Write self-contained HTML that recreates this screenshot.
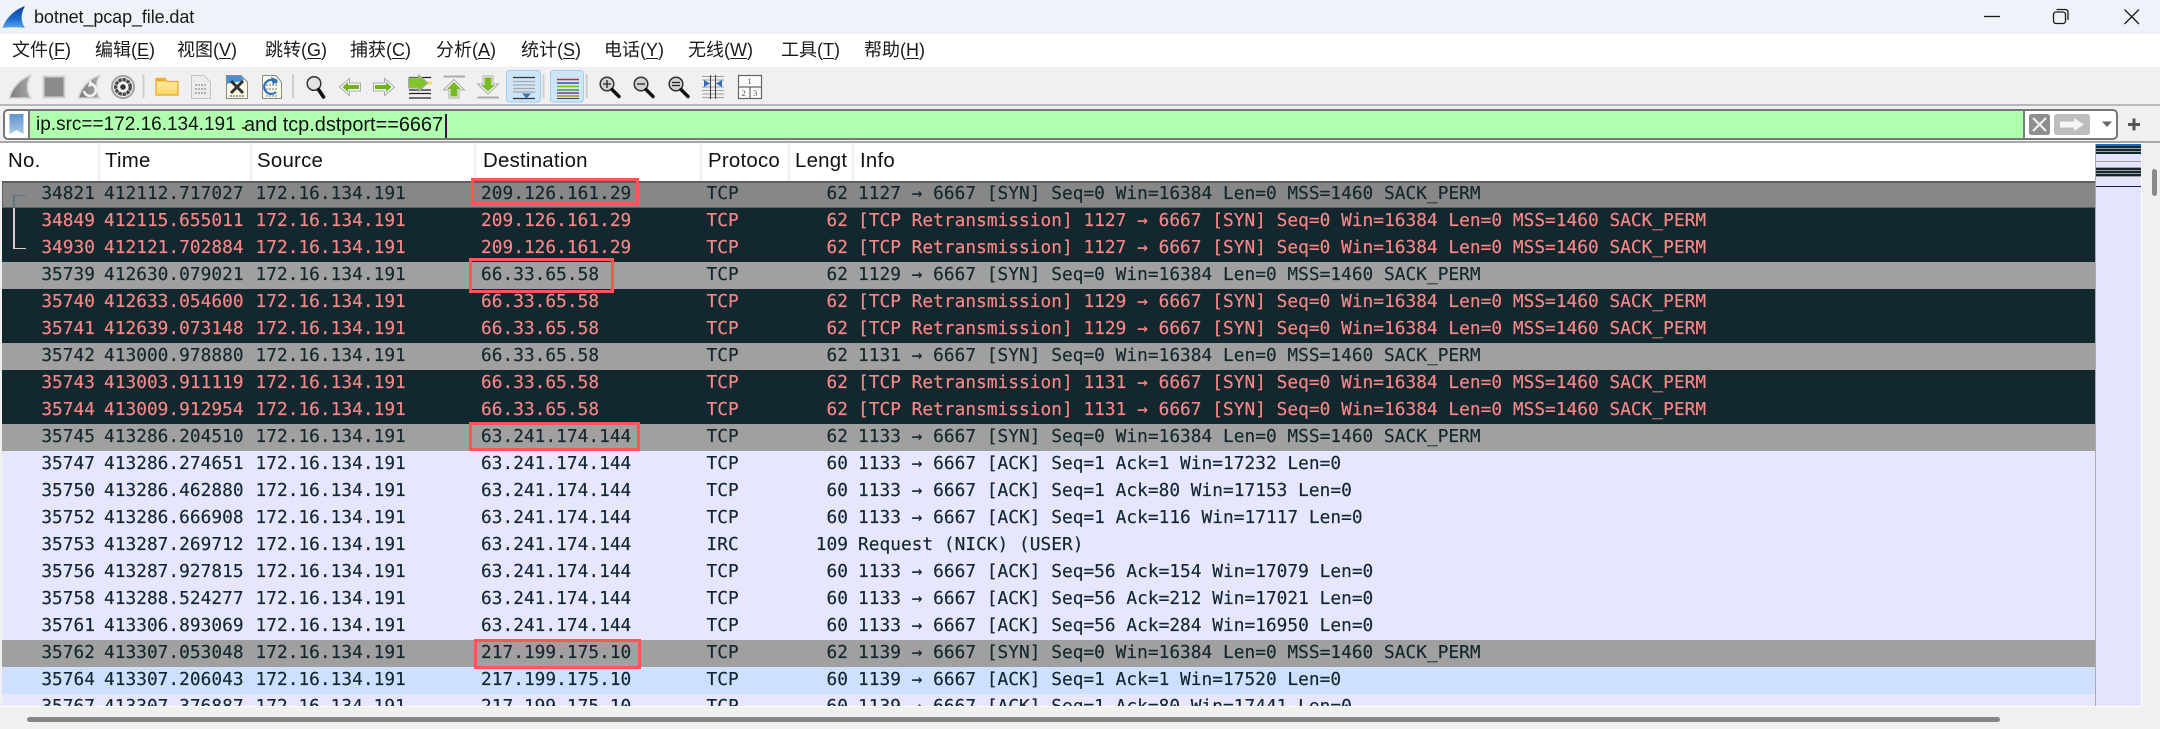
<!DOCTYPE html>
<html lang="zh"><head><meta charset="utf-8"><title>botnet_pcap_file.dat</title>
<style>
html,body{margin:0;padding:0;background:#f0f0f0}
#p{position:relative;width:2160px;height:729px;overflow:hidden;background:#f0f0f0;font-family:"Liberation Sans","Noto Sans CJK SC",sans-serif;color:#111}
#p div,#p span.x{position:absolute}
.tb{left:0;top:0;width:2160px;height:34px;background:#eef3fa}
.mn{left:0;top:34px;width:2160px;height:32px;background:#fff}
.m{position:absolute;top:37px;font-size:18px;line-height:26px;white-space:nowrap;color:#1a1a1a}
.m u{text-underline-offset:2px}
.h{position:absolute;top:143px;font-size:20.4px;letter-spacing:.25px;line-height:36px;color:#111;white-space:nowrap}
.s{top:143px;width:2px;height:38px;background:#f0f0f0}
.r{left:0;width:2095px;height:27px;clip-path:inset(0 0 0 2px);font-family:"DejaVu Sans Mono","Liberation Mono",monospace;font-size:17.8px;line-height:26px;letter-spacing:.03px;white-space:pre;text-rendering:geometricPrecision;color:#12272e;-webkit-text-stroke:.18px currentColor}
.r b{position:absolute;top:0;font-weight:400}
.r .a{left:30px;width:65px;text-align:right}.r .c{left:104px}.r .e{left:255.500px}.r .f{left:481px}.r .g{left:706.500px}.r .j{left:790px;width:58px;text-align:right}.r .k{left:858px}
.G{background:#a0a0a0}.D{background:#12272e;color:#f78787}.L{background:#e7e6ff}.B{background:#cfdfff}
.box{border:3px solid #f55;box-sizing:border-box}
.mm{left:2096px;width:45px}
</style></head><body><div id="p">
<div class="tb"></div><div class="mn"></div>
<span class="x" style="left:34px;top:5px;font-size:18px;line-height:24px;color:#1b1b1b;letter-spacing:-.1px">botnet_pcap_file.dat</span>
<span class="m" style="left:12px">文件(<u>F</u>)</span>
<span class="m" style="left:95px">编辑(<u>E</u>)</span>
<span class="m" style="left:177px">视图(<u>V</u>)</span>
<span class="m" style="left:265px">跳转(<u>G</u>)</span>
<span class="m" style="left:350px">捕获(<u>C</u>)</span>
<span class="m" style="left:436px">分析(<u>A</u>)</span>
<span class="m" style="left:521px">统计(<u>S</u>)</span>
<span class="m" style="left:604px">电话(<u>Y</u>)</span>
<span class="m" style="left:688px">无线(<u>W</u>)</span>
<span class="m" style="left:781px">工具(<u>T</u>)</span>
<span class="m" style="left:864px">帮助(<u>H</u>)</span>

<div style="left:0;top:66px;width:2160px;height:1px;background:#fafafa"></div>
<div style="left:0;top:104px;width:2160px;height:2px;background:#b8b8b8"></div>

<!-- filter -->
<div style="left:3px;top:109px;width:2115px;height:31px;box-sizing:border-box;background:#fff;border:2px solid #777;border-radius:5px"></div>
<div style="left:30px;top:111px;width:1993px;height:27px;background:#afffaf"></div>
<div style="left:28px;top:111px;width:2px;height:27px;background:#7c7c7c"></div>
<div style="left:2023px;top:111px;width:2px;height:27px;background:#7c7c7c"></div>
<span class="x" style="left:36px;top:112px;font-size:19px;line-height:26px;color:#111;white-space:pre">ip.src==172.16.134.191</span>
<span class="x" style="left:244px;top:112px;font-size:19.9px;line-height:26px;color:#111;white-space:pre">and tcp.dstport==6667</span>
<div style="left:242px;top:127px;width:3px;height:2px;background:#7a4a10"></div>
<div style="left:445px;top:114px;width:2px;height:24px;background:#3d1048"></div>

<!-- header -->
<div style="left:0;top:141px;width:2160px;height:2px;background:#a6a6a6"></div>
<div style="left:0;top:143px;width:2095px;height:38px;background:#fff"></div>
<div style="left:2095px;top:143px;width:47px;height:38px;background:#fff"></div>
<div class="s" style="left:98px"></div><div class="s" style="left:250px"></div><div class="s" style="left:474px"></div><div class="s" style="left:700px"></div><div class="s" style="left:788px"></div><div class="s" style="left:852px"></div>
<span class="h" style="left:8px">No.</span>
<span class="h" style="left:105px">Time</span>
<span class="h" style="left:257px">Source</span>
<span class="h" style="left:483px">Destination</span>
<span class="h" style="left:708px">Protoco</span>
<span class="h" style="left:795px">Lengt</span>
<span class="h" style="left:860px">Info</span>

<!-- rows -->
<div class="r" style="top:181px;background:#878787"><b class="a">34821</b><b class="c">412112.717027</b><b class="e">172.16.134.191</b><b class="f">209.126.161.29</b><b class="g">TCP</b><b class="j">62</b><b class="k">1127 → 6667 [SYN] Seq=0 Win=16384 Len=0 MSS=1460 SACK_PERM</b></div>
<div class="r D" style="top:208px"><b class="a">34849</b><b class="c">412115.655011</b><b class="e">172.16.134.191</b><b class="f">209.126.161.29</b><b class="g">TCP</b><b class="j">62</b><b class="k">[TCP Retransmission] 1127 → 6667 [SYN] Seq=0 Win=16384 Len=0 MSS=1460 SACK_PERM</b></div>
<div class="r D" style="top:235px"><b class="a">34930</b><b class="c">412121.702884</b><b class="e">172.16.134.191</b><b class="f">209.126.161.29</b><b class="g">TCP</b><b class="j">62</b><b class="k">[TCP Retransmission] 1127 → 6667 [SYN] Seq=0 Win=16384 Len=0 MSS=1460 SACK_PERM</b></div>
<div class="r G" style="top:262px"><b class="a">35739</b><b class="c">412630.079021</b><b class="e">172.16.134.191</b><b class="f">66.33.65.58</b><b class="g">TCP</b><b class="j">62</b><b class="k">1129 → 6667 [SYN] Seq=0 Win=16384 Len=0 MSS=1460 SACK_PERM</b></div>
<div class="r D" style="top:289px"><b class="a">35740</b><b class="c">412633.054600</b><b class="e">172.16.134.191</b><b class="f">66.33.65.58</b><b class="g">TCP</b><b class="j">62</b><b class="k">[TCP Retransmission] 1129 → 6667 [SYN] Seq=0 Win=16384 Len=0 MSS=1460 SACK_PERM</b></div>
<div class="r D" style="top:316px"><b class="a">35741</b><b class="c">412639.073148</b><b class="e">172.16.134.191</b><b class="f">66.33.65.58</b><b class="g">TCP</b><b class="j">62</b><b class="k">[TCP Retransmission] 1129 → 6667 [SYN] Seq=0 Win=16384 Len=0 MSS=1460 SACK_PERM</b></div>
<div class="r G" style="top:343px"><b class="a">35742</b><b class="c">413000.978880</b><b class="e">172.16.134.191</b><b class="f">66.33.65.58</b><b class="g">TCP</b><b class="j">62</b><b class="k">1131 → 6667 [SYN] Seq=0 Win=16384 Len=0 MSS=1460 SACK_PERM</b></div>
<div class="r D" style="top:370px"><b class="a">35743</b><b class="c">413003.911119</b><b class="e">172.16.134.191</b><b class="f">66.33.65.58</b><b class="g">TCP</b><b class="j">62</b><b class="k">[TCP Retransmission] 1131 → 6667 [SYN] Seq=0 Win=16384 Len=0 MSS=1460 SACK_PERM</b></div>
<div class="r D" style="top:397px"><b class="a">35744</b><b class="c">413009.912954</b><b class="e">172.16.134.191</b><b class="f">66.33.65.58</b><b class="g">TCP</b><b class="j">62</b><b class="k">[TCP Retransmission] 1131 → 6667 [SYN] Seq=0 Win=16384 Len=0 MSS=1460 SACK_PERM</b></div>
<div class="r G" style="top:424px"><b class="a">35745</b><b class="c">413286.204510</b><b class="e">172.16.134.191</b><b class="f">63.241.174.144</b><b class="g">TCP</b><b class="j">62</b><b class="k">1133 → 6667 [SYN] Seq=0 Win=16384 Len=0 MSS=1460 SACK_PERM</b></div>
<div class="r L" style="top:451px"><b class="a">35747</b><b class="c">413286.274651</b><b class="e">172.16.134.191</b><b class="f">63.241.174.144</b><b class="g">TCP</b><b class="j">60</b><b class="k">1133 → 6667 [ACK] Seq=1 Ack=1 Win=17232 Len=0</b></div>
<div class="r L" style="top:478px"><b class="a">35750</b><b class="c">413286.462880</b><b class="e">172.16.134.191</b><b class="f">63.241.174.144</b><b class="g">TCP</b><b class="j">60</b><b class="k">1133 → 6667 [ACK] Seq=1 Ack=80 Win=17153 Len=0</b></div>
<div class="r L" style="top:505px"><b class="a">35752</b><b class="c">413286.666908</b><b class="e">172.16.134.191</b><b class="f">63.241.174.144</b><b class="g">TCP</b><b class="j">60</b><b class="k">1133 → 6667 [ACK] Seq=1 Ack=116 Win=17117 Len=0</b></div>
<div class="r L" style="top:532px"><b class="a">35753</b><b class="c">413287.269712</b><b class="e">172.16.134.191</b><b class="f">63.241.174.144</b><b class="g">IRC</b><b class="j">109</b><b class="k">Request (NICK) (USER)</b></div>
<div class="r L" style="top:559px"><b class="a">35756</b><b class="c">413287.927815</b><b class="e">172.16.134.191</b><b class="f">63.241.174.144</b><b class="g">TCP</b><b class="j">60</b><b class="k">1133 → 6667 [ACK] Seq=56 Ack=154 Win=17079 Len=0</b></div>
<div class="r L" style="top:586px"><b class="a">35758</b><b class="c">413288.524277</b><b class="e">172.16.134.191</b><b class="f">63.241.174.144</b><b class="g">TCP</b><b class="j">60</b><b class="k">1133 → 6667 [ACK] Seq=56 Ack=212 Win=17021 Len=0</b></div>
<div class="r L" style="top:613px"><b class="a">35761</b><b class="c">413306.893069</b><b class="e">172.16.134.191</b><b class="f">63.241.174.144</b><b class="g">TCP</b><b class="j">60</b><b class="k">1133 → 6667 [ACK] Seq=56 Ack=284 Win=16950 Len=0</b></div>
<div class="r G" style="top:640px"><b class="a">35762</b><b class="c">413307.053048</b><b class="e">172.16.134.191</b><b class="f">217.199.175.10</b><b class="g">TCP</b><b class="j">62</b><b class="k">1139 → 6667 [SYN] Seq=0 Win=16384 Len=0 MSS=1460 SACK_PERM</b></div>
<div class="r B" style="top:667px"><b class="a">35764</b><b class="c">413307.206043</b><b class="e">172.16.134.191</b><b class="f">217.199.175.10</b><b class="g">TCP</b><b class="j">60</b><b class="k">1139 → 6667 [ACK] Seq=1 Ack=1 Win=17520 Len=0</b></div>
<div class="r L" style="top:694px;height:12px;overflow:hidden"><b class="a">35767</b><b class="c">413307.376887</b><b class="e">172.16.134.191</b><b class="f">217.199.175.10</b><b class="g">TCP</b><b class="j">60</b><b class="k">1139 → 6667 [ACK] Seq=1 Ack=80 Win=17441 Len=0</b></div>

<!-- selected row frame -->
<div style="left:2px;top:181px;width:2093px;height:27px;box-sizing:border-box;border:2px solid #5e5e5e;border-width:2px 0 1px 1px"></div>
<!-- related packet tree -->
<div style="left:14px;top:195px;width:12px;height:1px;background:#5c7884"></div>
<div style="left:13px;top:195px;width:2px;height:13px;background:#5c7884"></div>
<div style="left:13px;top:208px;width:2px;height:41px;background:#e3c8c8"></div>
<div style="left:14px;top:248px;width:12px;height:1px;background:#e3c8c8"></div>

<!-- red annotation boxes -->
<div class="box" style="left:471px;top:178px;width:168px;height:27px"></div>
<div class="box" style="left:469px;top:258px;width:145px;height:35px"></div>
<div class="box" style="left:469px;top:422px;width:171px;height:29px"></div>
<div class="box" style="left:474px;top:639px;width:167px;height:30px"></div>

<!-- minimap -->
<div style="left:2095px;top:181px;width:1px;height:525px;background:#aaa"></div>
<div style="left:2095px;top:144px;width:1px;height:37px;background:#aaa"></div>
<div style="left:2141px;top:143px;width:1px;height:563px;background:#fff"></div>
<div class="mm" style="top:144px;height:562px;background:#e4e4ff"></div>
<div class="mm" style="top:144px;height:2px;background:#1a6db5"></div>
<div class="mm" style="top:146px;height:8px;background:repeating-linear-gradient(#12272e 0 2px,#a0a0a0 2px 3px)"></div>
<div class="mm" style="top:161px;height:1px;background:#a0a0a0"></div>
<div class="mm" style="top:167px;height:10px;background:repeating-linear-gradient(#a0a0a0 0 1px,#12272e 1px 3px)"></div>
<div class="mm" style="top:186px;height:1px;background:#12272e"></div>

<!-- scrollbars -->
<div style="left:2152px;top:169px;width:5px;height:27px;border-radius:3px;background:#8a8a8a"></div>
<div style="left:0;top:706px;width:2142px;height:1px;background:#fff"></div>
<div style="left:27px;top:717px;width:1973px;height:5px;border-radius:3px;background:#878787"></div>

<!-- SVG icons -->
<svg width="2160" height="142" viewBox="0 0 2160 142" style="position:absolute;left:0;top:0">
<defs>
<linearGradient id="bl" x1="0" y1="0" x2="0" y2="1"><stop offset="0" stop-color="#0b3f9e"/><stop offset=".6" stop-color="#1f6dd0"/><stop offset="1" stop-color="#58a6e8"/></linearGradient>
<linearGradient id="gr" x1="0" y1="0" x2="1" y2="0"><stop offset="0" stop-color="#7a7a7a"/><stop offset="1" stop-color="#a8a8a8"/></linearGradient>
<linearGradient id="yl" x1="0" y1="0" x2="0" y2="1"><stop offset="0" stop-color="#fff0b0"/><stop offset="1" stop-color="#fbd666"/></linearGradient>
<linearGradient id="bm" x1="0" y1="0" x2="0" y2="1"><stop offset="0" stop-color="#5f93cc"/><stop offset="1" stop-color="#a9c9ea"/></linearGradient>
</defs>
<!-- logo -->
<path d="M2.500 28 C6 18 14 10 25 6 C20.500 14 20.500 21 25 28 C18 27 9 27 2.500 28Z" fill="url(#bl)"/>
<!-- window buttons -->
<path d="M1984 16.500H2000" stroke="#1a1a1a" stroke-width="1.300"/>
<rect x="2053.500" y="12" width="12" height="11.500" rx="2.500" fill="none" stroke="#1a1a1a" stroke-width="1.300"/>
<path d="M2056.500 9.500H2065C2067 9.500 2068 10.500 2068 12.500V20" fill="none" stroke="#1a1a1a" stroke-width="1.300"/>
<path d="M2124.500 9.500L2139 24M2139 9.500L2124.500 24" stroke="#1a1a1a" stroke-width="1.300"/>
<!-- fin -->
<path d="M9.500 98 C12 88 20 79 30.500 75.500 C26.500 83 26.500 91 30.500 98Z" fill="url(#gr)" stroke="#cfcfcf" stroke-width="1.500"/>
<!-- stop -->
<rect x="43.500" y="76.500" width="21" height="21" fill="#8c8c8c" stroke="#d2d2d2" stroke-width="2"/>
<!-- restart fin -->
<path d="M78.500 98 C81 88 89 79 99.500 75.500 C95.500 83 95.500 91 99.500 98Z" fill="url(#gr)" stroke="#cfcfcf" stroke-width="1.500"/>
<path d="M91 84 A6 6 0 1 1 84 91" fill="none" stroke="#f4f4f4" stroke-width="2.500"/>
<path d="M90 80 L94 85 L88 87Z" fill="#f4f4f4"/>
<!-- gear -->
<circle cx="123" cy="87" r="11" fill="#f5f5f5" stroke="#a0a0a0" stroke-width="2"/>
<circle cx="123" cy="87" r="7.300" fill="none" stroke="#4a4a4a" stroke-width="3.400" stroke-dasharray="3.500 .7"/>
<circle cx="123" cy="87" r="2.800" fill="#333"/>
<path d="M143.500 74V98" stroke="#cfcfcf" stroke-width="2"/>
<!-- folder -->
<path d="M156 95V78.500H165L167 81.500H178V95Z" fill="url(#yl)" stroke="#e9a825" stroke-width="1.200"/>
<path d="M156 78H165L167 81.500H156Z" fill="#f2ad1e"/>
<!-- gray doc -->
<path d="M191.500 75.500H204L210.500 82V98.500H191.500Z" fill="#ececec" stroke="#c4c4c4"/>
<path d="M195 85H207M195 89H207M195 93H207" stroke="#b0b0b0" stroke-width="2" stroke-dasharray="2 1"/>
<!-- close doc -->
<path d="M226.500 75.500H241L247.500 82V98.500H226.500Z" fill="#fbf8e4" stroke="#8a8a8a"/>
<path d="M227 76H241L244 80C238 83 232 82 227 84Z" fill="#4a8fd4"/>
<path d="M231 81L243 93M243 81L231 93" stroke="#333" stroke-width="3"/>
<path d="M230 96H244" stroke="#a0a0a0" stroke-width="2" stroke-dasharray="2 1"/>
<!-- reload doc -->
<path d="M262.500 75.500H276L281.500 82V98.500H262.500Z" fill="#fbf8e4" stroke="#8a8a8a"/>
<path d="M266 85H278M266 89H278M266 96H278" stroke="#b8b8b8" stroke-width="2" stroke-dasharray="2 1"/>
<path d="M277 83 A7 7 0 1 0 276 92" fill="none" stroke="#2f6fb8" stroke-width="2.200"/>
<path d="M271 77L278 80L273 85Z" fill="#2f6fb8"/>
<path d="M293 74V98" stroke="#cfcfcf" stroke-width="2"/>
<!-- find -->
<circle cx="314" cy="83.500" r="6.800" fill="#e2e2e2" stroke="#333" stroke-width="1.500"/>
<path d="M318.500 89.500L323.500 97" stroke="#111" stroke-width="3.600" stroke-linecap="round"/>
<!-- back / forward -->
<path d="M339.500 87L349.500 78.500V83H360.500V91H349.500V95.500Z" fill="#f6f6f6" stroke="#ababab"/>
<path d="M342.500 87L348 82V85H359V89H348V92Z" fill="#6eb41e"/>
<path d="M394.500 87L384.500 78.500V83H373.500V91H384.500V95.500Z" fill="#f6f6f6" stroke="#ababab"/>
<path d="M391.500 87L386 82V85H375V89H386V92Z" fill="#6eb41e"/>
<!-- go to packet -->
<path d="M409 77.500H431M426 82.500H432M409 90H431M409 93.500H431M409 98H431" stroke="#222" stroke-width="1.300"/>
<path d="M426 83H432" stroke="#f8e14a" stroke-width="3"/>
<path d="M408.500 78H418.500V74.800L428 83L418.500 91.500V88H408.500Z" fill="#80c52b" stroke="#aaa"/>
<!-- first -->
<path d="M443.500 76.500H465" stroke="#ababab" stroke-width="2"/>
<path d="M454 79.500L464.500 90H459V98H449V90H443.500Z" fill="#f6f6f6" stroke="#ababab"/>
<path d="M454 82L461 89H457.500V96.500H450.500V89H447Z" fill="#76bb22"/>
<!-- last -->
<path d="M477.500 97.500H499" stroke="#ababab" stroke-width="2"/>
<path d="M488 94L498.500 84H493V76H483V84H477.500Z" fill="#f6f6f6" stroke="#ababab"/>
<path d="M488 91.500L495 85H491.500V77.500H484.500V85H481Z" fill="#76bb22"/>
<!-- autoscroll -->
<rect x="506.500" y="70.500" width="34" height="31.500" rx="3" fill="#cde5f9" stroke="#9fcdf1"/>
<path d="M513 77.500H535" stroke="#333" stroke-width="1.200"/>
<path d="M513 81.500H535M513 85H535M513 88.500H535M513 92H535" stroke="#a8a8a8" stroke-width="1.200"/>
<path d="M513 98.500H535" stroke="#333" stroke-width="1.200"/>
<path d="M522 93.500H531L526.500 98.500Z" fill="#3e72b4"/>
<path d="M543.500 74V98" stroke="#cfcfcf" stroke-width="2"/>
<!-- colorize -->
<rect x="550.500" y="70.500" width="33" height="31.500" rx="3" fill="#cde5f9" stroke="#9fcdf1"/>
<path d="M557 79.500H579" stroke="#d8242a" stroke-width="1.400"/>
<path d="M557 83H579" stroke="#2e5fa8" stroke-width="1.400"/>
<path d="M557 86.500H579" stroke="#7cc000" stroke-width="1.400"/>
<path d="M557 90H579" stroke="#4a9a38" stroke-width="1.400"/>
<path d="M557 93H579" stroke="#6e3f90" stroke-width="1.400"/>
<path d="M557 96H579" stroke="#b8900c" stroke-width="1.400"/>
<path d="M557 98.500H579" stroke="#444" stroke-width="1"/>
<path d="M586.700 74V98" stroke="#cfcfcf" stroke-width="2"/>
<!-- zoom -->
<circle cx="607" cy="84" r="6.800" fill="#d2d2d2" stroke="#333" stroke-width="1.500"/><path d="M603 84H611M607 80V88" stroke="#222" stroke-width="1.300"/><path d="M612 89.500L619 96.500" stroke="#111" stroke-width="3.400" stroke-linecap="round"/>
<circle cx="641" cy="84" r="6.800" fill="#d2d2d2" stroke="#333" stroke-width="1.500"/><path d="M637 84H645" stroke="#222" stroke-width="1.300"/><path d="M646 89.500L653 96.500" stroke="#111" stroke-width="3.400" stroke-linecap="round"/>
<circle cx="676" cy="84" r="6.800" fill="#d2d2d2" stroke="#333" stroke-width="1.500"/><path d="M672 82.500H680M672 85.500H680" stroke="#222" stroke-width="1.200"/><path d="M681 89.500L688 96.500" stroke="#111" stroke-width="3.400" stroke-linecap="round"/>
<!-- resize cols -->
<path d="M702 76.500H724M702 80H724M702 87H724M702 90.500H724M702 94H724M702 97.500H724" stroke="#a0a0a0" stroke-width="1.100"/>
<path d="M710.500 75V99M715.500 75V99" stroke="#444" stroke-width="1.100"/>
<path d="M704 80V87L710 83.500ZM722 80V87L716 83.500Z" fill="#2f6fb8"/>
<!-- layout -->
<rect x="738.500" y="75.500" width="23" height="23" fill="#fbfbfb" stroke="#666" stroke-width="1.200"/>
<path d="M738.500 87H761.500M750 87V98.500" stroke="#666" stroke-width="1.200"/>
<text x="747.500" y="84" font-family="Liberation Serif,serif" font-size="8.500" fill="#555">1</text>
<text x="741.500" y="96" font-family="Liberation Serif,serif" font-size="8.500" fill="#555">2</text>
<text x="753" y="96" font-family="Liberation Serif,serif" font-size="8.500" fill="#555">3</text>
<!-- bookmark -->
<path d="M9.500 114H23.500V134L16.500 130L9.500 134Z" fill="url(#bm)"/>
<!-- clear / apply -->
<rect x="2029" y="114" width="21" height="21" rx="2.500" fill="#8e8e8e"/>
<path d="M2033 118L2046 131M2046 118L2033 131" stroke="#efefef" stroke-width="2.200"/>
<rect x="2054" y="114" width="36" height="21" rx="3" fill="#bdbdbd"/>
<path d="M2060 121.500H2074V118L2084 124.500L2074 131V127.500H2060Z" fill="#f5f5f5"/>
<path d="M2102 121.500H2112L2107 127Z" fill="#666"/>
<path d="M2128 124.500H2140M2134 118.500V130.500" stroke="#555" stroke-width="3"/>
</svg>
</div></body></html>
